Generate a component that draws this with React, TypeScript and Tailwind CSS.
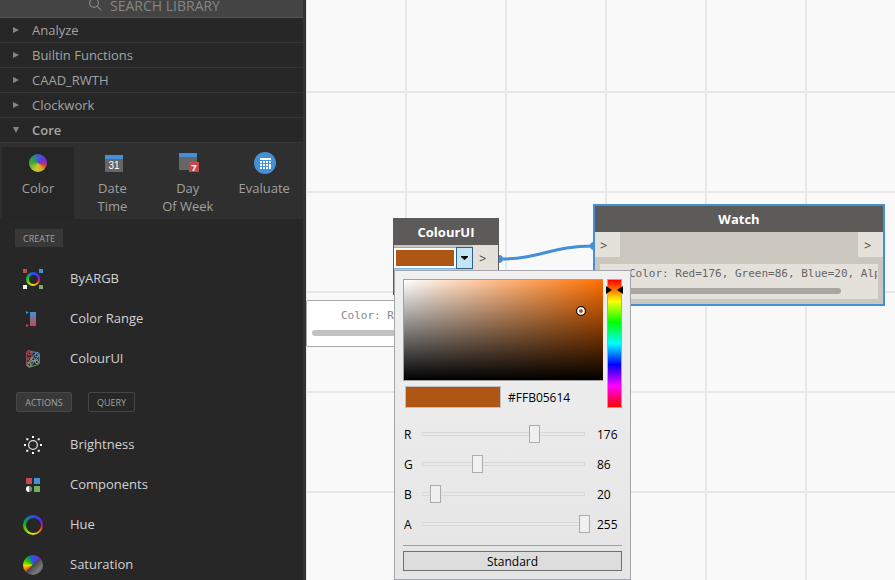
import React from "react";

interface MethodItem {
  name: string;
  icon: React.ReactNode;
}

interface SliderProps {
  label: string;
  value: number;
}

const collapsed = ["Analyze", "Builtin Functions", "CAAD_RWTH", "Clockwork"];

const channels: SliderProps[] = [
  { label: "R", value: 176 },
  { label: "G", value: 86 },
  { label: "B", value: 20 },
  { label: "A", value: 255 },
];

const WheelIcon = () => (
  <div className="w-[18px] h-[18px] rounded-full bg-[conic-gradient(#3a5fd0,#5a3fd6_12%,#8a2fc8_22%,#c02a80_27%,#d8542c_32%,#d6a92a_40%,#c8c832_52%,#a0bc30_64%,#3fa832_76%,#2f9a50_85%,#3a5fd0)]" />
);

const CalendarIcon = () => (
  <svg width="18" height="17" viewBox="0 0 18 17" className="mt-px ml-[2px]">
    <rect width="18" height="17" fill="#666" />
    <rect width="18" height="4" fill="#4390d8" />
    <text x="9" y="14" textAnchor="middle" fontSize="10" fill="#fff" fontFamily="Liberation Sans, sans-serif">31</text>
  </svg>
);

const WeekIcon = () => (
  <svg width="20" height="19" viewBox="0 0 20 19" className="-mt-px ml-px">
    <rect width="18" height="17" fill="#666" />
    <rect width="18" height="4" fill="#4390d8" />
    <rect x="10" y="9" width="10" height="10" fill="#c44a4a" />
    <text x="15" y="17.5" textAnchor="middle" fontSize="9.5" fontWeight="bold" fill="#fff" fontFamily="Open Sans, sans-serif">7</text>
  </svg>
);

const EvaluateIcon = () => (
  <svg width="22" height="22" viewBox="0 0 22 22" className="ml-px">
    <circle cx="11" cy="11" r="11" fill="#4390d8" />
    <path fill="#fff" d="M6 6h11v2H6zM6 9h2v2H6zM9 9h2v2H9zM12 9h2v2h-2zM15 9h2v2h-2zM6 12h2v2H6zM9 12h2v2H9zM12 12h2v2h-2zM15 12h2v5h-2zM6 15h2v2H6zM9 15h2v2H9zM12 15h2v2h-2z" />
  </svg>
);

const categories: MethodItem[] = [
  { name: "Color", icon: <WheelIcon /> },
  { name: "Date\nTime", icon: <CalendarIcon /> },
  { name: "Day\nOf Week", icon: <WeekIcon /> },
  { name: "Evaluate", icon: <EvaluateIcon /> },
];

const ArgbIcon = () => (
  <div className="w-5 h-5 grid place-items-center relative">
    <svg width="20" height="20" viewBox="0 0 20 20" className="absolute">
      <rect width="4" height="4" fill="#c44a4a" />
      <rect x="16" width="4" height="4" fill="#4390d8" />
      <rect y="16" width="4" height="4" fill="#eee" />
      <rect x="16" y="16" width="4" height="4" fill="#70b060" />
    </svg>
    <div className="w-[14px] h-[14px] rounded-full grid place-items-center bg-[conic-gradient(#1f50f0,#5030ff_15%,#9020f0_24%,#f03020_30%,#f0a000_38%,#f0e000_50%,#80d000_64%,#20c020_76%,#2080a0_88%,#1f50f0)]">
      <div className="w-[9px] h-[9px] rounded-full bg-[#272727]" />
    </div>
  </div>
);

const RangeIcon = () => (
  <svg width="14" height="16" viewBox="0 0 14 16">
    <defs>
      <linearGradient id="range" x1="0" y1="0" x2="0" y2="1">
        <stop offset="0" stopColor="#4390d8" />
        <stop offset="1" stopColor="#c44a4a" />
      </linearGradient>
    </defs>
    <rect x="4" y="1" width="6" height="14" fill="url(#range)" />
    <path d="M0 0l3 1.5L0 3z" fill="#4390d8" />
    <path d="M0 13l3 1.5L0 16z" fill="#c44a4a" />
  </svg>
);

// overlapping colour chips with round holes
const ColourUIIcon = () => (
  <svg width="14" height="18" viewBox="0 0 14 18" fill="none" strokeWidth="1">
    <path d="M.7 15.5V2.5Q.7 .6 3 .7L6 1.5V5L4.5 16" stroke="#a85a5e" />
    <path d="M5 1.8L12 2.5Q13.5 3 13.3 5L4.5 16.5M10 3L2 13" stroke="#5c91bd" />
    <path d="M13.3 5V13Q13 14.5 11 14.8L3.5 17.3Q1 17 .8 15M1 13L12 9.5" stroke="#6f9b70" />
    <circle cx="3.4" cy="3.4" r="1.6" stroke="#c85a5e" />
    <circle cx="10.7" cy="5.2" r="1.6" stroke="#69a0cc" />
    <circle cx="3.4" cy="9" r="1.4" stroke="#b0686c" />
    <circle cx="7.3" cy="9.3" r="1.6" stroke="#88a2b5" />
    <circle cx="3.3" cy="14.6" r="1.6" stroke="#8fb090" />
    <circle cx="10.8" cy="12" r="1.6" stroke="#82aa83" />
  </svg>
);

const BrightnessIcon = () => (
  <svg width="18" height="18" viewBox="0 0 18 18">
    <circle cx="9" cy="9" r="4.4" fill="none" stroke="#ddd" strokeWidth="1.3" />
    <path fill="#fff" d="M8 0h2v2H8zM8 16h2v2H8zM0 8h2v2H0zM16 8h2v2h-2zM2.3 2.3h2v2h-2zM13.7 2.3h2v2h-2zM2.3 13.7h2v2h-2zM13.7 13.7h2v2h-2z" />
  </svg>
);

const ComponentsIcon = () => (
  <svg width="14" height="14" viewBox="0 0 14 14">
    <rect width="6" height="6" fill="#c44a4a" />
    <rect x="8" width="6" height="6" fill="#4390d8" />
    <rect x="8" y="8" width="6" height="6" fill="#70b060" />
    <path d="M3 8a3 3 0 0 0 0 6z" fill="#fff" />
    <path d="M3 8a3 3 0 0 1 0 6z" fill="#888" />
  </svg>
);

const HueIcon = () => (
  <div className="w-5 h-5 rounded-full grid place-items-center bg-[conic-gradient(#1f50f0,#5030ff_15%,#9020f0_23%,#f01040_27%,#f07000_34%,#e8e000_46%,#d0e000_56%,#40c800_70%,#10b020_78%,#2070a0_90%,#1f50f0)]">
    <div className="w-[15px] h-[15px] rounded-full bg-[#272727]" />
  </div>
);

const SaturationIcon = () => (
  <div className="w-5 h-5 rounded-full bg-[linear-gradient(135deg,transparent_50%,#48484a_50%,#77777a_75%,#58585a_100%),conic-gradient(#3050f0,#7030d8_12%,#505054_14%,#505054_60%,#e04020_63%,#f0a000_69%,#e8e000_74%,#50c800_82%,#10b020_89%,#2070c0_95%,#3050f0)]" />
);

const createItems: MethodItem[] = [
  { name: "ByARGB", icon: <ArgbIcon /> },
  { name: "Color Range", icon: <RangeIcon /> },
  { name: "ColourUI", icon: <ColourUIIcon /> },
];

const actionItems: MethodItem[] = [
  { name: "Brightness", icon: <BrightnessIcon /> },
  { name: "Components", icon: <ComponentsIcon /> },
  { name: "Hue", icon: <HueIcon /> },
  { name: "Saturation", icon: <SaturationIcon /> },
];

const MethodList: React.FC<{ items: MethodItem[] }> = ({ items }) => (
  <ul>
    {items.map((item) => (
      <li key={item.name} className="h-10 flex items-center text-[13px] text-[#d2d2d2]">
        <div className="w-5 ml-[23px] mr-[27px] flex justify-center">{item.icon}</div>
        {item.name}
      </li>
    ))}
  </ul>
);

const Sidebar = () => (
  <aside className="w-[306px] h-full shrink-0 overflow-hidden bg-[#272727] border-r-[3px] border-[#333]">
    <div className="h-[18px] flex items-start bg-[#444] border-b border-[#555] text-[#858585]">
      <svg width="13" height="13" viewBox="0 0 13 13" className="ml-[89px] -mt-[2px] shrink-0" fill="none" stroke="currentColor" strokeWidth="1.2">
        <circle cx="5" cy="5" r="4.4" />
        <path d="M8.2 8.2L12.3 12.3" />
      </svg>
      <span className="ml-2 -mt-[4px] text-[14px] leading-5 whitespace-nowrap">SEARCH LIBRARY</span>
    </div>
    {collapsed.map((name) => (
      <div key={name} className="h-[25px] flex items-center border-b border-[#353535] text-[13px] text-[#a3a3a3]">
        <svg width="6" height="6" viewBox="0 0 6 6" className="ml-[13px] mr-[13px]">
          <path d="M0 0L6 3L0 6z" fill="#858585" />
        </svg>
        <span className="pt-[2px]">{name}</span>
      </div>
    ))}
    <div className="h-[25px] flex items-center border-b border-[#353535] text-[13px] font-semibold text-[#a8a8a8]">
      <svg width="6" height="6" viewBox="0 0 6 6" className="ml-[13px] mr-[13px]">
        <path d="M0 0H6L3 6z" fill="#858585" />
      </svg>
      <span className="pt-[2px]">Core</span>
    </div>
    <div className="h-[76px] pt-1 pl-[2px] flex gap-[3.4px] bg-[#2f2f2f]">
      {categories.map((category, i) => (
        <div
          key={category.name}
          className={`w-[72px] h-[72px] shrink-0 flex flex-col items-center text-center text-[13px] leading-[18px] text-[#a0a0a0] ${i === 0 ? "bg-[#262626]" : ""}`}
        >
          <div className="h-8 flex items-center">{category.icon}</div>
          <span className={`whitespace-pre ${i === 1 || i === 2 ? "pr-[2px]" : ""}`}>{category.name}</span>
        </div>
      ))}
    </div>
    <div className="pt-[10px] pl-[15px]">
      <div className="w-12 h-[18px] pt-px flex items-center justify-center bg-[#383838] text-[9px] text-[#a0a0a0]">CREATE</div>
    </div>
    <div className="pt-[12px]">
      <MethodList items={createItems} />
    </div>
    <div className="pt-[13px] pl-4 flex gap-4 text-[9px] text-[#a0a0a0]">
      <div className="w-14 h-5 pt-[2px] flex items-center justify-center rounded-[2px] border border-[#464646] bg-[#383838]">ACTIONS</div>
      <div className="w-[47px] h-5 pt-[2px] flex items-center justify-center rounded-[2px] border border-[#464646]">QUERY</div>
    </div>
    <div className="pt-[13px]">
      <MethodList items={actionItems} />
    </div>
  </aside>
);

const Port: React.FC<{ className: string }> = ({ className }) => (
  <div className={`w-[25px] h-[25px] flex items-center bg-[#e4e1db] text-[13px] text-[#444] ${className}`}>&gt;</div>
);

const ColourNode = () => (
  <div className="absolute left-[87px] top-[218px] w-[106px] h-[77px] bg-[#cbc6be] border-x border-[#5c5b5a]">
    <div className="h-[27px] -mx-px pt-[2px] flex items-center justify-center bg-[#5c5b5a] text-[13px] font-bold text-white">ColourUI</div>
    <div className="flex">
      <div className="mt-[2px] w-[79px] h-[22px] flex">
        <div className="grow border-y border-[#7eb0e6] bg-white py-[2px] pl-[2px] pr-[2px]">
          <div className="h-full bg-[#b05614]" />
        </div>
        <div className="w-[17px] flex items-center justify-center bg-[#c4e5f6] border border-[#2c628b]">
          <svg width="7" height="4" viewBox="0 0 7 4">
            <path d="M0 0H7V1L3.5 4L0 1z" fill="#000" />
          </svg>
        </div>
      </div>
      <Port className="pl-[6px] pt-[2px]" />
    </div>
  </div>
);

const WatchNode = () => (
  <div className="absolute left-[287px] top-[204px] w-[292px] h-[102px] bg-[#cbc6be] border-2 border-[#4390d8]">
    <div className="h-[26px] pt-[2px] flex items-center justify-center bg-[#5c5b5a] text-[13px] font-bold text-white">Watch</div>
    <div className="flex justify-between">
      <Port className="pl-[5px] pt-[3px]" />
      <Port className="pl-[6px] pt-[3px]" />
    </div>
    <div className="mt-[7px] mx-[5px] h-[35px] pl-[29px] pr-px pt-[2px] bg-[#e4e1db]">
      <p className="overflow-hidden font-['DejaVu_Sans_Mono',monospace] text-[11px] leading-[15px] whitespace-pre text-[#666]">
        Color: Red=176, Green=86, Blue=20, Alpha=255
      </p>
      <div className="mt-[7px] w-[212px] h-[6px] rounded-r-[3px] bg-[#a9a6a1]" />
    </div>
  </div>
);

const PreviewBubble = () => (
  <div className="absolute left-0 top-[300px] w-[120px] h-[47px] overflow-hidden rounded-[2px] border border-[#a9a9a9] bg-white">
    <p className="pt-[7px] pl-[34px] font-['DejaVu_Sans_Mono',monospace] text-[11px] leading-[16px] whitespace-pre text-[#888]">
      Color: R
    </p>
    <div className="mt-[6px] ml-[5px] w-[160px] h-[6px] rounded-[3px] bg-[#c3c3c3]" />
  </div>
);

const ChannelSlider: React.FC<SliderProps> = ({ label, value }) => (
  <div className="h-[30px] flex items-center">
    <span className="w-[18px] pt-[2px]">{label}</span>
    <div className="relative w-[163px] h-[4px] border border-[#d6d9d8] bg-[#e7eaea]">
      <div
        className="absolute -top-[8px] w-[11px] h-[18px] border border-[#acacac] bg-[#f0f0f0]"
        style={{ left: Math.round((value / 255) * 162) - 6 }}
      />
    </div>
    <span className="ml-3 pt-[2px]">{value}</span>
  </div>
);

const ColorPicker = () => (
  <div className="absolute left-[88px] top-[270px] w-[237px] h-[310px] pt-2 px-2 border border-[#a5a5ad] bg-linear-to-b from-[#f0f0f0] to-[#e5e5e5] text-[12px] text-black">
    <div className="flex justify-between">
      <div>
        <div className="relative w-[200px] h-[102px] border border-r-0 border-[#a0a0a0] bg-[linear-gradient(to_top,#000,transparent),linear-gradient(to_right,#fff,#ff6f00)]">
          <svg width="10" height="10" viewBox="0 0 10 10" className="absolute left-[172px] top-[26px]">
            <circle cx="5" cy="5" r="4.3" fill="#b05614" stroke="#111" strokeWidth="1.4" />
            <circle cx="5" cy="5" r="2.9" fill="none" stroke="#fff" strokeWidth="1.8" />
          </svg>
        </div>
        <div className="mt-[5px] ml-[2px] flex items-center">
          <div className="w-24 h-[22px] border border-[#c0c0c0] bg-[#b05614]" />
          <span className="ml-[7px] pt-[2px]">#FFB05614</span>
        </div>
      </div>
      <div className="relative w-[15px] h-[129px] border border-[#a9a9a9] bg-[linear-gradient(to_bottom,#f00,#ff0_16.67%,#0f0_33.33%,#0ff_50%,#00f_66.67%,#f0f_83.33%,#f00)]">
        <svg width="17" height="8" viewBox="0 0 17 8" className="absolute -left-[2px] top-[6px]">
          <path d="M0 0L6 4L0 8zM17 0L11 4L17 8z" fill="#000" />
        </svg>
      </div>
    </div>
    <div className="mt-[11px] pl-px">
      {channels.map((channel) => (
        <ChannelSlider key={channel.label} {...channel} />
      ))}
    </div>
    <div className="mt-[6px] h-px bg-[#a0a0a0]" />
    <div className="mt-[5px] h-5 pt-[2px] flex items-center justify-center border border-[#707070] bg-[#ddd]">Standard</div>
  </div>
);

const Workspace = () => (
  <main className="relative grow h-full overflow-hidden bg-[#f9f9f9] bg-[linear-gradient(to_right,#e7e7e7_2px,transparent_2px),linear-gradient(to_bottom,#e7e7e7_2px,transparent_2px)] bg-[length:100px_100px] bg-[position:-1px_91px]">
    <PreviewBubble />
    <ColourNode />
    <svg width="589" height="580" viewBox="306 0 589 580" className="absolute left-0 top-0">
      <path d="M500 259C540 259 552 246 593 246" fill="none" stroke="#4390d8" strokeWidth="3" />
      <path d="M499 255a4 4 0 0 1 0 8zM594 242a4 4 0 0 0 0 8z" fill="#4390d8" />
    </svg>
    <WatchNode />
    <ColorPicker />
  </main>
);

const App: React.FC = () => {
  return (
    <div className="w-[895px] h-[580px] flex overflow-hidden font-['Open_Sans',sans-serif]">
      <Sidebar />
      <Workspace />
    </div>
  );
};

export default App;
